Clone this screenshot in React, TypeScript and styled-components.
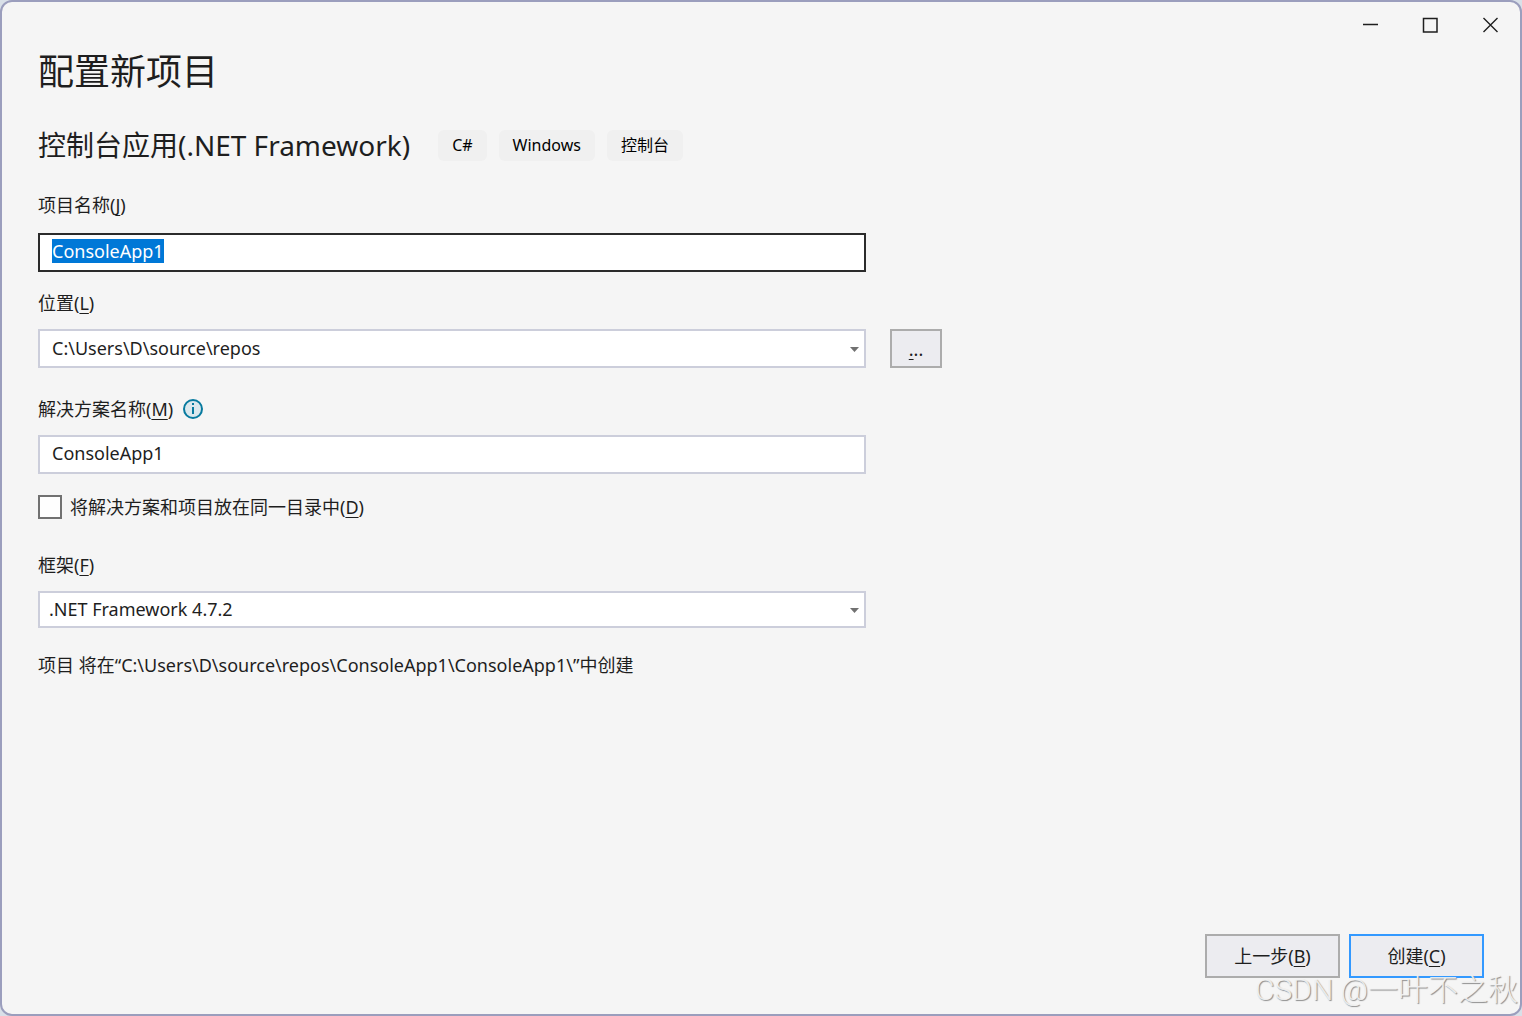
import React, { useEffect, useRef, useState } from "react";
import styled, { createGlobalStyle } from "styled-components";

const GlobalStyle = createGlobalStyle`
  *, *::before, *::after { box-sizing: border-box; }
  body {
    margin: 0;
    background: #d9e0e8;
    color: #1e1e1e;
    font-family: "Noto Sans", "Noto Sans CJK SC", sans-serif;
    font-size: 18px;
    line-height: 24px;
  }
  button, input, select { font: inherit; color: inherit; }
  u { text-underline-offset: 3px; text-decoration-thickness: 1px; }
`;

const Frame = styled.div`
  position: relative;
  display: flex;
  flex-direction: column;
  min-height: 100vh;
  background: #f5f5f5;
  border: 2px solid #9b9ebd;
  border-radius: 12px;
  overflow: hidden;
`;

const TitleBar = styled.header`
  display: flex;
  justify-content: flex-end;
  height: 45px;
`;

const WindowButton = styled.button`
  display: flex;
  align-items: center;
  justify-content: center;
  width: 60px;
  padding: 0;
  border: 0;
  background: transparent;
`;

const Main = styled.main`
  display: flex;
  flex-direction: column;
  flex: 1;
  padding: 0 36px;
`;

const Title = styled.h1`
  margin: 0 0 28px;
  font-size: 36px;
  font-weight: 400;
  line-height: 50px;
`;

const TemplateRow = styled.div`
  display: flex;
  align-items: center;
  gap: 28px;
  margin-bottom: 28px;
`;

const TemplateName = styled.h2`
  margin: 0;
  font-size: 28px;
  font-weight: 400;
  line-height: 40px;
`;

const Tags = styled.ul`
  display: flex;
  gap: 12px;
  margin: 0;
  padding: 0;
  list-style: none;
`;

const Tag = styled.li`
  padding: 4px 14px;
  border-radius: 6px;
  background: #f0f0f0;
  color: #000;
  font-size: 16px;
  line-height: 23px;
`;

const Form = styled.form`
  display: flex;
  flex-direction: column;
  flex: 1;
`;

const Field = styled.div<{ $gap?: number; $after: number }>`
  display: flex;
  flex-direction: column;
  gap: ${(p) => p.$gap ?? 14}px;
  margin-bottom: ${(p) => p.$after}px;
`;

const LabelRow = styled.div`
  display: flex;
  align-items: center;
  gap: 10px;
`;

const ControlRow = styled.div`
  display: flex;
  gap: 24px;
`;

const TextInput = styled.input`
  width: 100%;
  max-width: 828px;
  height: 39px;
  padding: 0 12px 4px;
  border: 2px solid #cccedb;
  border-radius: 0;
  background: #fff;
  outline: none;
  &:focus { border-color: #2b2b2b; }
  &::selection { background: #0078d7; color: #fff; }
`;

const SelectBox = styled.div`
  display: grid;
  align-items: center;
  width: 100%;
  max-width: 828px;
  > * { grid-area: 1 / 1; }
  > svg { justify-self: end; margin-right: 7px; pointer-events: none; }
`;

const Select = styled.select<{ $compact?: boolean }>`
  appearance: none;
  width: 100%;
  height: ${(p) => (p.$compact ? 37 : 39)}px;
  padding: 0 32px 2px ${(p) => (p.$compact ? 9 : 12)}px;
  border: 2px solid #cccedb;
  border-radius: 0;
  background: #fff;
  outline: none;
`;

const Button = styled.button<{ $width: number; $primary?: boolean }>`
  flex: none;
  width: ${(p) => p.$width}px;
  padding: 0;
  border: 2px solid ${(p) => (p.$primary ? "#3399ff" : "#acacac")};
  background: #ececf0;
`;

const CheckRow = styled.div`
  display: flex;
  align-items: center;
  gap: 8px;
  margin-bottom: 34px;
`;

const Checkbox = styled.input`
  appearance: none;
  width: 24px;
  height: 24px;
  margin: 0;
  border: 2px solid #717171;
  background: #fefefe;
  &:checked { background: #717171; }
`;

const Status = styled.p`
  margin: 0;
`;

const Footer = styled.footer`
  display: flex;
  justify-content: flex-end;
  gap: 9px;
  height: 44px;
  margin: auto 0 36px;
`;

const Watermark = styled.div`
  position: absolute;
  right: 2px;
  bottom: 2px;
  color: rgba(245, 245, 245, 0.9);
  font-family: Roboto, "Noto Sans CJK SC", sans-serif;
  font-size: 30px;
  font-weight: 300;
  line-height: 44px;
  text-shadow: 1px 1px 1px #8c8c8c;
  pointer-events: none;
`;

const Arrow = () => (
  <svg width="9" height="7" viewBox="0 0 9 7" aria-hidden="true">
    <path d="M0 2h9L4.5 7z" fill="#717171" />
  </svg>
);

const InfoIcon = () => (
  <svg width="20" height="20" viewBox="0 0 20 20" role="img" aria-label="信息">
    <circle cx="10" cy="10" r="9" fill="#dbe8ed" stroke="#077a9f" strokeWidth="2" />
    <path d="M9 4h2v2H9zM9 8h2v7H9z" fill="#077a9f" />
  </svg>
);

export default function App() {
  const nameRef = useRef<HTMLInputElement>(null);
  const [name, setName] = useState("ConsoleApp1");
  const [solution, setSolution] = useState("ConsoleApp1");

  useEffect(() => {
    nameRef.current?.focus();
    nameRef.current?.select();
  }, []);

  return (
    <>
      <GlobalStyle />
      <Frame>
        <TitleBar>
          <WindowButton aria-label="最小化">
            <svg width="16" height="16" viewBox="0 0 16 16"><path d="M1 7.5h15" stroke="#1e1e1e" strokeWidth="1.5" /></svg>
          </WindowButton>
          <WindowButton aria-label="最大化">
            <svg width="16" height="16" viewBox="0 0 16 16"><path d="M1.5 1.5h13.5v13.5H1.5z" fill="none" stroke="#1e1e1e" strokeWidth="1.5" /></svg>
          </WindowButton>
          <WindowButton aria-label="关闭">
            <svg width="16" height="16" viewBox="0 0 16 16"><path d="M1.5 1l14 14M15.5 1L1.5 15" stroke="#1e1e1e" strokeWidth="1.4" /></svg>
          </WindowButton>
        </TitleBar>
        <Main>
          <Title>配置新项目</Title>
          <TemplateRow>
            <TemplateName>控制台应用(.NET Framework)</TemplateName>
            <Tags>
              <Tag>C#</Tag>
              <Tag>Windows</Tag>
              <Tag>控制台</Tag>
            </Tags>
          </TemplateRow>
          <Form onSubmit={(e) => e.preventDefault()}>
            <Field $gap={16} $after={19}>
              <label htmlFor="project">项目名称(<u>J</u>)</label>
              <TextInput id="project" ref={nameRef} value={name} onChange={(e) => setName(e.target.value)} />
            </Field>
            <Field $after={29}>
              <label htmlFor="location">位置(<u>L</u>)</label>
              <ControlRow>
                <SelectBox>
                  <Select id="location">
                    <option>C:\Users\D\source\repos</option>
                  </Select>
                  <Arrow />
                </SelectBox>
                <Button type="button" $width={52} aria-label="浏览"><u>.</u>..</Button>
              </ControlRow>
            </Field>
            <Field $after={21}>
              <LabelRow>
                <label htmlFor="solution">解决方案名称(<u>M</u>)</label>
                <InfoIcon />
              </LabelRow>
              <TextInput id="solution" value={solution} onChange={(e) => setSolution(e.target.value)} />
            </Field>
            <CheckRow>
              <Checkbox type="checkbox" id="same-dir" />
              <label htmlFor="same-dir">将解决方案和项目放在同一目录中(<u>D</u>)</label>
            </CheckRow>
            <Field $after={25}>
              <label htmlFor="framework">框架(<u>F</u>)</label>
              <SelectBox>
                <Select id="framework" $compact>
                  <option>.NET Framework 4.7.2</option>
                </Select>
                <Arrow />
              </SelectBox>
            </Field>
            <Status>项目 将在“C:\Users\D\source\repos\ConsoleApp1\ConsoleApp1\”中创建</Status>
            <Footer>
              <Button type="button" $width={135}>上一步(<u>B</u>)</Button>
              <Button type="submit" $width={135} $primary>创建(<u>C</u>)</Button>
            </Footer>
          </Form>
        </Main>
        <Watermark>CSDN @一叶不之秋</Watermark>
      </Frame>
    </>
  );
}
